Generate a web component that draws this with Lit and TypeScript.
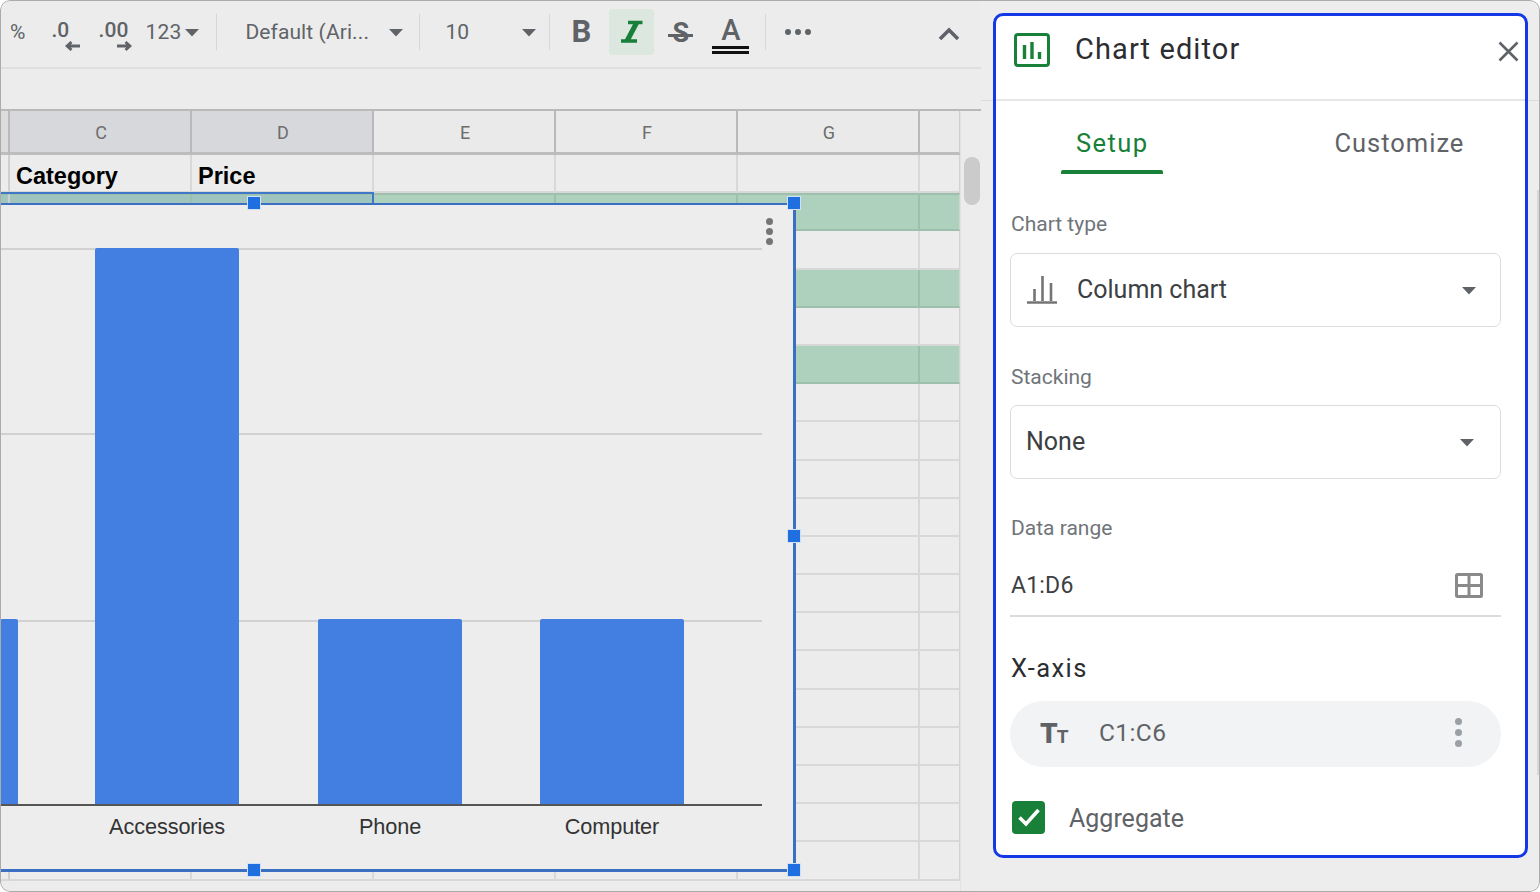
import { LitElement, html, css } from "lit";
import { customElement } from "lit/decorators.js";

const caret = (cls = "caret") => html`<svg class=${cls} width="14" height="8" viewBox="0 0 14 8"><path d="M0 0h14L7 7.5z" fill="currentColor"/></svg>`;

const bars = [
  { gap: 0, w: 18, v: 1, label: "" },
  { gap: 77, w: 144, v: 3, label: "Accessories" },
  { gap: 79, w: 144, v: 1, label: "Phone" },
  { gap: 78, w: 144, v: 1, label: "Computer" },
];
const UNIT = 185.3;
const rowKinds = ["sel", "", "g", "", "g", "", "", "", "", "", "", "", "", "", "", "", "", ""];

@customElement("app-root")
export class AppRoot extends LitElement {
  static styles = css`
    :host { display: block; position: relative; width: 1540px; height: 892px; overflow: hidden; border-radius: 10px; background: #ececec; font-family: Roboto, "Liberation Sans", sans-serif; color: #5f6368; }
    * { box-sizing: border-box; }
    .frame { position: absolute; inset: 0; border: 1px solid #ababab; border-radius: 10px; pointer-events: none; z-index: 9; }
    .app { display: flex; height: 892px; }
    .left { width: 981px; flex: none; display: flex; flex-direction: column; }

    .toolbar { height: 69px; flex: none; border-bottom: 2px solid #dfdfdf; display: flex; align-items: center; padding: 0 0 4px 10px; font-size: 21px; color: #5f6368; }
    .toolbar > * { flex: none; }
    .sep { width: 1px; height: 36px; background: #d6d6d6; }
    .caret { display: block; color: #5f6368; }
    .dec { display: flex; flex-direction: column; height: 38px; line-height: 24px; font-weight: 500; margin-top: 10px; position: relative; }
    .dec svg { display: block; margin-top: -1px; }
    .dec0 { width: 28px; margin-left: 26px; }
    .dec0 svg { margin-left: 14px; }
    .dec00 { width: 32px; margin-left: 19px; letter-spacing: 0.2px; }
    .dec00 svg { margin-left: 19px; }
    .num { margin-left: 15px; width: 40px; letter-spacing: 0.3px; }
    .c123 { margin-top: 3px; }
    .s1 { margin-left: 17px; }
    .font { margin-left: 28px; width: 144px; letter-spacing: 0.1px; white-space: nowrap; }
    .c2 { margin-top: 3px; }
    .s2 { margin-left: 16px; }
    .size { margin-left: 25px; width: 77px; }
    .c3 { margin-top: 3px; }
    .s3 { margin-left: 13px; }
    .bold { margin-left: 21px; width: 38px; font-size: 31px; font-weight: 700; line-height: 36px; }
    .ital { display: block; width: 45px; height: 46px; background: #dbe7df; border-radius: 4px; }
    .strike { margin-left: 14px; width: 25px; font-size: 27px; font-weight: 700; line-height: 36px; text-align: center; position: relative; margin-top: 3px; }
    .strike::after { content: ""; position: absolute; left: 0; right: 0; top: 19px; height: 3px; background: #5f6368; }
    .color { margin-left: 19px; width: 37px; display: flex; flex-direction: column; align-items: center; margin-top: 6px; }
    .color span { font-size: 29px; font-weight: 500; line-height: 30px; height: 31px; }
    .color i { display: block; width: 37px; height: 8px; border-top: 3px solid #111; border-bottom: 3px solid #111; }
    .s4 { margin-left: 16px; }
    .more { margin-left: 19px; display: flex; gap: 4px; }
    .more i, .kebab i { display: block; border-radius: 50%; background: currentColor; }
    .more i { width: 6px; height: 6px; }
    .chev { margin-left: 127px; margin-top: 5px; }

    .formula { height: 42px; flex: none; border-bottom: 2px solid #b9b9b9; }

    .sheet { position: relative; flex: 1; display: flex; min-height: 0; }
    .grid { width: 960px; flex: none; }
    .row { display: grid; grid-template-columns: 10px repeat(5, 182px) 40px; height: 38.2px; }
    .cell { height: 38.2px; border-right: 2px solid #d8d8d8; border-bottom: 2px solid #d8d8d8; color: #000; font: 700 23.5px/43px "Liberation Sans", sans-serif; padding-left: 6px; white-space: nowrap; overflow: hidden; }
    .row .cell:first-child { padding: 0; border-right-color: #cfcfcf; }
    .row .cell:last-child { border-right: 1px solid #d2d2d2; }
    .heads { display: grid; grid-template-columns: 10px repeat(5, 182px) 40px; height: 44px; }
    .h { height: 44px; border-right: 2px solid #b9b9b9; border-bottom: 3px solid #bdbdbd; font-size: 18px; line-height: 44px; text-align: center; text-indent: 2px; color: #6d6d6d; background: #eaeaea; }
    .h:last-child { border-right: 1px solid #cfcfcf; }
    .h.on { background: #d7d8dc; }
    .h.edge { background: #dcdcdf; }
    .g .cell { background: #aed1bd; border-color: #9dbfab; }
    .sel .cell { background: #aed1bd; border-color: #9dbfab; border-top: 2px solid #9dbfab; }
    .sel .cell.hi { background: #9fc5be; }

    .scroll { flex: 1; border-left: 1px solid #e2e2e2; padding: 46px 2px 0 3px; }
    .thumb { width: 16px; height: 48px; border-radius: 8px; background: #cbcbcb; }

    .chart { position: absolute; left: 0; top: 92px; width: 796px; height: 669px; background: #ededed; border: solid #3a6fc2; border-width: 2px 3px 3px 0; z-index: 2; display: flex; flex-direction: column; }
    .selbox { position: absolute; left: 0; top: 81px; width: 374px; height: 13px; border: 2px solid #3f78c6; border-left: 0; border-bottom: 0; z-index: 1; }
    .plot { position: relative; width: 762px; height: 558px; margin-top: 43px; flex: none; border-bottom: 2px solid #555; display: flex; flex-direction: column; }
    .gl { height: 185px; border-top: 2px solid #d1d1d1; flex: none; }
    .gl:nth-child(2) { height: 187px; }
    .bars { position: absolute; inset: 0; display: flex; align-items: flex-end; }
    .bar { background: #427fe1; border-radius: 2px 2px 0 0; flex: none; }
    .labels { display: flex; font: 21.7px/24px "Liberation Sans", sans-serif; color: #333; margin-top: 9px; }
    .labels span { flex: none; text-align: center; letter-spacing: -0.1px; white-space: nowrap; }
    .kebab { position: absolute; display: flex; flex-direction: column; gap: 3px; color: #757575; }
    .kebab i { width: 7px; height: 7px; }
    .k1 { left: 766px; top: 107px; z-index: 3; }
    .hd { position: absolute; width: 14px; height: 14px; background: #1f6fe0; border: 1px solid #cfe0f7; z-index: 4; }

    .side { flex: 1; position: relative; padding: 13px 0 0 12px; background: #ededed; }
    .sideline { position: absolute; left: 0; right: 0; top: 100px; height: 1px; background: #dcdcdc; }
    .sb { position: absolute; right: 1px; top: 190px; height: 585px; width: 2px; background: #d8d8d8; }
    .panel { position: relative; width: 535px; height: 845px; background: #fff; border: 3px solid #1339e6; border-radius: 10px; display: flex; flex-direction: column; padding: 0 0 0 15px; }
    .phead { height: 85px; margin-left: -15px; border-bottom: 2px solid #e6e6e6; display: flex; padding: 17px 0 0 18px; position: relative; flex: none; }
    .title { margin-left: 25px; font-size: 29px; line-height: 32px; color: #2b2d30; letter-spacing: 1.1px; }
    .close { position: absolute; left: 502px; top: 25px; }
    .tabs { display: flex; height: 73px; flex: none; margin-left: 65px; }
    .tab { font-size: 25.5px; line-height: 30px; letter-spacing: 1px; margin-top: 27px; color: #5f6368; position: relative; }
    .tab.on { color: #188038; letter-spacing: 1.4px; }
    .tab.on::after { content: ""; position: absolute; left: -15px; right: -15px; top: 42px; height: 4px; border-radius: 2px 2px 0 0; background: #188038; }
    .tab.off { margin-left: 186px; }
    .label { font-size: 21px; line-height: 26px; color: #70757a; }
    .select { width: 491px; height: 74px; margin: 16px 0 0 -1px; padding-bottom: 2px; border: 1px solid #dadce0; border-radius: 7px; display: flex; align-items: center; color: #3c4043; font-size: 25px; position: relative; flex: none; }
    .select .caret { position: absolute; right: 24px; top: 33px; }
    .select .ico { margin: 0 18px 0 14px; }
    .select .none { margin-left: 15px; }
    .sel2 { margin-top: 15px; }
    .sel2 .caret { right: 26px; }
    .l1 { margin-top: 37px; }
    .l2 { margin-top: 37px; }
    .l3 { margin-top: 36px; }
    .range { width: 491px; height: 60px; margin: 16px 0 0 -1px; border-bottom: 2px solid #dadce0; display: flex; align-items: flex-start; justify-content: space-between; padding: 15px 18px 0 1px; font-size: 23px; line-height: 28px; color: #3c4043; letter-spacing: 0.2px; flex: none; }
    .range svg { margin-top: 1px; }
    .xaxis { margin-top: 36px; font-size: 25.5px; line-height: 30px; color: #2b2d30; letter-spacing: 1.4px; }
    .pill { width: 491px; height: 66px; margin: 18px 0 0 -1px; padding: 0 0 3px 30px; background: #f1f3f4; border-radius: 33px; display: flex; align-items: center; font-size: 24.5px; color: #5f6368; letter-spacing: 0.4px; position: relative; flex: none; }
    .tt { width: 59px; display: flex; align-items: baseline; font-weight: 700; color: #5f6368; line-height: 30px; letter-spacing: 0; padding-top: 6px; }
    .tt b { font-size: 28px; }
    .tt small { font-size: 19px; font-weight: 700; margin-left: -1px; }
    .k2 { left: 445px; top: 17px; color: #9aa0a6; gap: 4px; }
    .k2 i { width: 7px; height: 7px; }
    .check { margin: 31px 0 0 -1px; display: flex; align-items: center; color: #5f6368; font-size: 25px; line-height: 34px; flex: none; }
    .check span { padding-top: 4px; }
    .box { width: 33px; height: 33px; border-radius: 4px; background: #188038; margin: 0 24px 0 2px; display: flex; align-items: center; justify-content: center; }
  `;

  private gridRows() {
    return rowKinds.map((kind) => html`
      <div class="row ${kind}">
        ${[0, 1, 2, 3, 4, 5, 6].map((c) => html`<div class="cell ${kind === "sel" && c <= 2 ? "hi" : ""}"></div>`)}
      </div>`);
  }

  render() {
    const chartIcon = html`<svg width="36" height="34" viewBox="0 0 36 34" fill="none"><rect x="1.500" y="1.500" width="33" height="31" rx="2.500" stroke="#188038" stroke-width="3"/><path d="M10.500 12v14M18 9v17M25.500 19v7" stroke="#188038" stroke-width="3.400"/></svg>`;
    return html`
      <div class="frame"></div>
      <div class="app">
        <div class="left">
          <div class="toolbar">
            <span>%</span>
            <div class="dec dec0"><span>.0</span><svg width="15" height="10" viewBox="0 0 15 10"><path d="M15 5H3M6.500 1 2 5l4.500 4" fill="none" stroke="#5f6368" stroke-width="2.800"/></svg></div>
            <div class="dec dec00"><span>.00</span><svg width="15" height="10" viewBox="0 0 15 10"><path d="M0 5h12M8.500 1 13 5 8.500 9" fill="none" stroke="#5f6368" stroke-width="2.800"/></svg></div>
            <span class="num">123</span>${caret("caret c123")}
            <div class="sep s1"></div>
            <span class="font">Default (Ari...</span>${caret("caret c2")}
            <div class="sep s2"></div>
            <span class="size">10</span>${caret("caret c3")}
            <div class="sep s3"></div>
            <span class="bold">B</span>
            <svg class="ital" viewBox="0 0 45 46" fill="none" stroke="#188038"><path d="M19 13.500h14.500M12 32h16" stroke-width="3.600"/><path d="M28 13 18 32" stroke-width="5"/></svg>
            <span class="strike">S</span>
            <div class="color"><span>A</span><i></i></div>
            <div class="sep s4"></div>
            <div class="more"><i></i><i></i><i></i></div>
            <svg class="chev" width="22" height="14" viewBox="0 0 22 14"><path d="M2 12 11 3l9 9" fill="none" stroke="#5f6368" stroke-width="3.600"/></svg>
          </div>
          <div class="formula"></div>
          <div class="sheet">
            <div class="grid">
              <div class="heads">
                <div class="h edge"></div>
                <div class="h on">C</div><div class="h on">D</div>
                <div class="h">E</div><div class="h">F</div><div class="h">G</div><div class="h"></div>
              </div>
              <div class="row">
                <div class="cell"></div><div class="cell">Category</div><div class="cell">Price</div>
                <div class="cell"></div><div class="cell"></div><div class="cell"></div><div class="cell"></div>
              </div>
              ${this.gridRows()}
            </div>
            <div class="scroll"><div class="thumb"></div></div>
            <div class="selbox"></div>
            <div class="chart">
              <div class="plot">
                <div class="gl"></div><div class="gl"></div><div class="gl"></div>
                <div class="bars">
                  ${bars.map((b) => html`<div class="bar" style="width:${b.w}px;height:${b.v * UNIT}px;margin-left:${b.gap}px"></div>`)}
                </div>
              </div>
              <div class="labels">
                ${bars.map((b) => html`<span style="width:${b.w}px;margin-left:${b.gap}px">${b.label}</span>`)}
              </div>
            </div>
            <div class="kebab k1"><i></i><i></i><i></i></div>
            <div class="hd" style="left:247px;top:85px"></div>
            <div class="hd" style="left:787px;top:85px"></div>
            <div class="hd" style="left:787px;top:418px"></div>
            <div class="hd" style="left:247px;top:752px"></div>
            <div class="hd" style="left:787px;top:752px"></div>
          </div>
        </div>
        <div class="side">
          <div class="sideline"></div>
          <div class="sb"></div>
          <div class="panel">
            <div class="phead">
              ${chartIcon}
              <div class="title">Chart editor</div>
              <svg class="close" width="21" height="21" viewBox="0 0 21 21"><path d="M1.500 1.500l18 18M19.500 1.500l-18 18" stroke="#5f6368" stroke-width="2.600"/></svg>
            </div>
            <div class="tabs">
              <div class="tab on">Setup</div>
              <div class="tab off">Customize</div>
            </div>
            <div class="label l1">Chart type</div>
            <div class="select">
              <svg class="ico" width="34" height="30" viewBox="0 0 34 30" fill="none" stroke="#757575" stroke-width="2.600"><path d="M2 28.500h30M9.500 27V15M17.500 27V2M26 27V9"/></svg>
              Column chart
              ${caret()}
            </div>
            <div class="label l2">Stacking</div>
            <div class="select sel2"><span class="none">None</span>${caret()}</div>
            <div class="label l3">Data range</div>
            <div class="range">
              <span>A1:D6</span>
              <svg width="28" height="25" viewBox="0 0 28 25" fill="none" stroke="#8a8a8a" stroke-width="3"><rect x="1.500" y="1.500" width="25" height="22" rx="1"/><path d="M14 1.500v22M1.500 12.500h25"/></svg>
            </div>
            <div class="xaxis">X-axis</div>
            <div class="pill">
              <span class="tt"><b>T</b><small>T</small></span>
              <span>C1:C6</span>
              <div class="kebab k2"><i></i><i></i><i></i></div>
            </div>
            <div class="check">
              <div class="box"><svg width="24" height="20" viewBox="0 0 24 20"><path d="M2.500 10.500 9 17 21.500 3" fill="none" stroke="#fff" stroke-width="3.600"/></svg></div>
              <span>Aggregate</span>
            </div>
          </div>
        </div>
      </div>
    `;
  }
}
